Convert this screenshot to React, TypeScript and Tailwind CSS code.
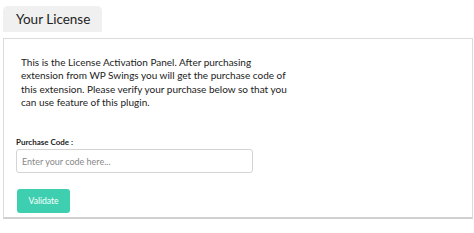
export default function App() {
  return (
    <div className="h-[233px] w-[474px] bg-white font-['Lato','Open_Sans',sans-serif] text-[#222]">
      <div className="pt-[6px] pl-[3px]">
        <div className="flex h-[26px] w-[99px] items-center rounded-t-[5px] bg-[#f0f0f0] pl-[13px] text-[13.5px] text-[#222]">
          Your License
        </div>
      </div>
      <div className="mt-[6px] ml-[3px] h-[181px] w-[470px] border border-b-2 border-[#dcdcdc] border-b-[#d0d0d0]">
        <p className="mt-[17px] ml-[17px] w-[272px] text-[10px] leading-[13.4px] text-[#222]">
          This is the License Activation Panel. After purchasing extension from WP Swings you will get the purchase code of this extension. Please verify your purchase below so that you can use feature of this plugin.
        </p>
        <div className="mt-[27px] ml-[12px]">
          <label className="block text-[8px] leading-[10px] font-bold text-[#222]">Purchase Code :</label>
          <input
            className="mt-[1px] h-[24px] w-[237px] rounded-[3px] border border-[#d4d4d4] px-[5px] text-[9px] text-[#555] placeholder:text-[#888] outline-none"
            placeholder="Enter your code here..."
          />
          <button className="mt-[16px] ml-[1px] flex h-[24px] w-[53px] items-center justify-center rounded-[3px] bg-[#3dcfb0] text-[8.5px] text-white">
            Validate
          </button>
        </div>
      </div>
    </div>
  );
}
